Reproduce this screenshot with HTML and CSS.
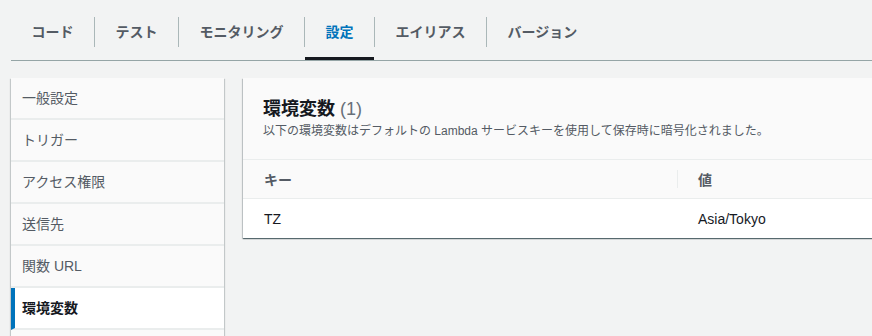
FILE: index.html
```html
<!DOCTYPE html>
<html lang="ja">
<head>
<meta charset="utf-8">
<title>Lambda 設定</title>
<link rel="stylesheet" href="styles.css">
</head>
<body>
<div class="tabs">
  <div class="tab">コード</div>
  <div class="sep"></div>
  <div class="tab">テスト</div>
  <div class="sep"></div>
  <div class="tab">モニタリング</div>
  <div class="sep"></div>
  <div class="tab active">設定</div>
  <div class="sep"></div>
  <div class="tab">エイリアス</div>
  <div class="sep"></div>
  <div class="tab">バージョン</div>
</div>
<div class="main">
  <nav class="nav">
    <div class="nav-item">一般設定</div>
    <div class="nav-item">トリガー</div>
    <div class="nav-item">アクセス権限</div>
    <div class="nav-item">送信先</div>
    <div class="nav-item">関数 URL</div>
    <div class="nav-item active">環境変数</div>
    <div class="nav-item"></div>
  </nav>
  <section class="card">
    <div class="card-header">
      <h2 class="title">環境変数 <span class="count">(1)</span></h2>
      <p class="desc">以下の環境変数はデフォルトの Lambda サービスキーを使用して保存時に暗号化されました。</p>
    </div>
    <div class="thead">
      <div class="th th-key">キー</div>
      <div class="th-sep"></div>
      <div class="th th-val">値</div>
    </div>
    <div class="trow">
      <div class="td td-key">TZ</div>
      <div class="td td-val">Asia/Tokyo</div>
    </div>
  </section>
</div>
</body>
</html>
```

FILE: styles.css
```css
html {
  overflow: hidden;
}
body {
  margin: 0;
  background: #f2f3f3;
  font-family: "Liberation Sans", "Noto Sans CJK JP", sans-serif;
  color: #16191f;
  width: 1200px;
}
.tabs {
  display: flex;
  margin-left: 11px;
  height: 60px;
  border-bottom: 1px solid #95a5a6;
  width: 861px;
}
.tab {
  box-sizing: border-box;
  height: 60px;
  padding: 5px 20.5px 0;
  display: flex;
  align-items: center;
  font-size: 14px;
  font-weight: bold;
  color: #545b64;
  border-bottom: 3px solid transparent;
  font-family: "Noto Sans CJK JP", sans-serif;
}
.tab.active {
  color: #0073bb;
  border-bottom-color: #16191f;
}
.sep {
  width: 1px;
  height: 30px;
  margin-top: 17px;
  background: #aab7b8;
}
.main {
  display: flex;
  align-items: flex-start;
  margin-top: 17px;
  margin-left: 11px;
  gap: 19px;
}
.nav {
  width: 213px;
  background: #fafafa;
  box-shadow: 0 1px 1px 0 rgba(0, 28, 36, 0.3), 1px 1px 1px 0 rgba(0, 28, 36, 0.15), -1px 1px 1px 0 rgba(0, 28, 36, 0.15);
}
.nav-item {
  box-sizing: border-box;
  height: 42px;
  padding: 0 0 2px 11px;
  border-bottom: 2px solid #eaeded;
  display: flex;
  align-items: center;
  font-size: 14px;
  color: #545b64;
  background: #fafafa;
}
.nav-item.active {
  background: #fff;
  color: #16191f;
  font-weight: bold;
  border-left: 4px solid #0073bb;
  padding-left: 7px;
}
.card {
  width: 720px;
  background: #fff;
  box-shadow: 0 1px 1px 0 rgba(0, 28, 36, 0.5), 1px 1px 1px 0 rgba(0, 28, 36, 0.15), -1px 1px 1px 0 rgba(0, 28, 36, 0.15);
}
.card-header {
  box-sizing: border-box;
  height: 82px;
  padding: 20px 20px 0;
  background: #fafafa;
  border-bottom: 1px solid #eaeded;
}
.title {
  margin: 0;
  font-size: 18px;
  line-height: 22px;
  font-weight: bold;
  color: #16191f;
}
.count {
  font-weight: normal;
  color: #687078;
}
.desc {
  margin: 3px 0 0;
  font-size: 12px;
  line-height: 16px;
  color: #545b64;
}
.thead {
  box-sizing: border-box;
  height: 39px;
  display: flex;
  align-items: center;
  background: #fafafa;
  border-bottom: 1px solid #eaeded;
}
.th {
  font-size: 14px;
  font-weight: bold;
  color: #545b64;
}
.th-key {
  width: 434px;
  box-sizing: border-box;
  padding-left: 21px;
}
.th-sep {
  width: 1px;
  height: 18px;
  background: #eaeded;
}
.th-val {
  padding-left: 20px;
}
.trow {
  height: 39px;
  display: flex;
  align-items: center;
}
.td {
  font-size: 14px;
  color: #16191f;
}
.td-key {
  width: 435px;
  box-sizing: border-box;
  padding-left: 21px;
}
.td-val {
  padding-left: 20px;
}
```
